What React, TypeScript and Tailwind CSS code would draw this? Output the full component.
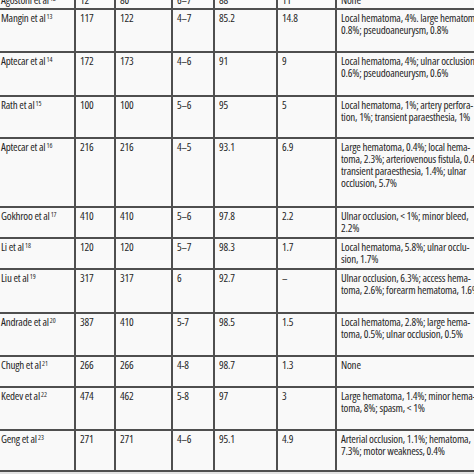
const rows: { h: string; name: string; ref: string; cells: string[]; notes: string[] }[] = [
  { h: 'h-[18px]', name: 'Agostoni et al', ref: '12', cells: ['12', '80', '6–7', '88', '11'], notes: ['None'] },
  { h: 'h-[43px]', name: 'Mangin et al', ref: '13', cells: ['117', '122', '4–7', '85.2', '14.8'], notes: ['Local hematoma, 4%. large hematoma,', '0.8%; pseudoaneurysm, 0.8%'] },
  { h: 'h-[44px]', name: 'Aptecar et al', ref: '14', cells: ['172', '173', '4–6', '91', '9'], notes: ['Local hematoma, 4%; ulnar occlusion,', '0.6%; pseudoaneurysm, 0.6%'] },
  { h: 'h-[42px]', name: 'Rath et al', ref: '15', cells: ['100', '100', '5–6', '95', '5'], notes: ['Local hematoma, 1%; artery perfora-', 'tion, 1%; transient paraesthesia, 1%'] },
  { h: 'h-[69px]', name: 'Aptecar et al', ref: '16', cells: ['216', '216', '4–5', '93.1', '6.9'], notes: ['Large hematoma, 0.4%; local hema-', 'toma, 2.3%; arteriovenous fistula, 0.4%;', 'transient paraesthesia, 1.4%; ulnar', 'occlusion, 5.7%'] },
  { h: 'h-[31px]', name: 'Gokhroo et al', ref: '17', cells: ['410', '410', '5–6', '97.8', '2.2'], notes: ['Ulnar occlusion, < 1%; minor bleed,', '2.2%'] },
  { h: 'h-[31px]', name: 'Li et al', ref: '18', cells: ['120', '120', '5–7', '98.3', '1.7'], notes: ['Local hematoma, 5.8%; ulnar occlu-', 'sion, 1.7%'] },
  { h: 'h-[44px]', name: 'Liu et al', ref: '19', cells: ['317', '317', '6', '92.7', '–'], notes: ['Ulnar occlusion, 6.3%; access hema-', 'toma, 2.6%; forearm hematoma, 1.6%'] },
  { h: 'h-[43px]', name: 'Andrade et al', ref: '20', cells: ['387', '410', '5-7', '98.5', '1.5'], notes: ['Local hematoma, 2.8%; large hema-', 'toma, 0.5%; ulnar occlusion, 0.5%'] },
  { h: 'h-[31px]', name: 'Chugh et al', ref: '21', cells: ['266', '266', '4-8', '98.7', '1.3'], notes: ['None'] },
  { h: 'h-[43px]', name: 'Kedev et al', ref: '22', cells: ['474', '462', '5-8', '97', '3'], notes: ['Large hematoma, 1.4%; minor hema-', 'toma, 8%; spasm, < 1%'] },
  { h: 'h-[41px]', name: 'Geng et al', ref: '23', cells: ['271', '271', '4–6', '95.1', '4.9'], notes: ['Arterial occlusion, 1.1%; hematoma,', '7.3%; motor weakness, 0.4%'] },
];

const widths = ['w-[40px]', 'w-[57px]', 'w-[42px]', 'w-[63px]', 'w-[59px]'];

export default function App() {
  return (
    <div
      className="w-[474px] h-[474px] overflow-hidden bg-[#f9f9f9] text-[#262626] text-[11px] font-medium leading-[12px] tracking-[-0.2px]"
      style={{ fontFamily: '"Open Sans", sans-serif', fontStretch: 'condensed' }}
    >
      <div className="-mt-[8px] -ml-[3px]">
        {rows.map((r, i) => (
          <div key={i} className={`flex border-b-2 border-[#4f4f4f] ${r.h}`}>
            <div className="w-[79px] shrink-0 border-r-2 border-[#4f4f4f] px-1 pt-[2px] whitespace-nowrap">
              {r.name}
              <sup className="text-[7px] ml-[1px] tracking-normal">{r.ref}</sup>
            </div>
            {r.cells.map((c, j) => (
              <div key={j} className={`${widths[j]} shrink-0 border-r-2 border-[#4f4f4f] px-1 pt-[2px]`}>
                {c}
              </div>
            ))}
            <div className="w-[160px] shrink-0 px-1 pt-[2px] whitespace-nowrap">
              {r.notes.map((n, k) => (
                <div key={k}>{n}</div>
              ))}
            </div>
          </div>
        ))}
        <div className="h-[20px] bg-[#e2e2e2]" />
      </div>
    </div>
  );
}
